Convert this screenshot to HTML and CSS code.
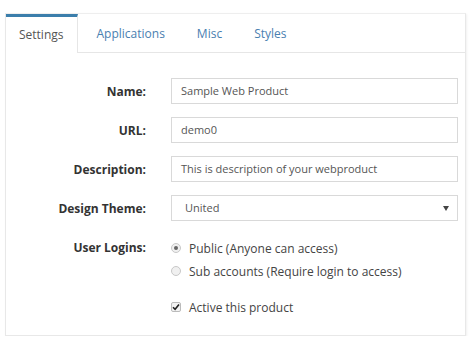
FILE: index.html
```html
<!DOCTYPE html>
<html>
<head>
<meta charset="utf-8">
<link rel="stylesheet" href="styles.css">
</head>
<body>
<div class="card">
  <ul class="tabs">
    <li class="tab active">Settings</li>
    <li class="tab">Applications</li>
    <li class="tab">Misc</li>
    <li class="tab">Styles</li>
  </ul>
  <form class="panel">
    <div class="row">
      <label class="lbl">Name:</label>
      <div class="ctrl"><div class="input">Sample Web Product</div></div>
    </div>
    <div class="row">
      <label class="lbl">URL:</label>
      <div class="ctrl"><div class="input">demo0</div></div>
    </div>
    <div class="row">
      <label class="lbl">Description:</label>
      <div class="ctrl"><div class="input">This is description of your webproduct</div></div>
    </div>
    <div class="row">
      <label class="lbl">Design Theme:</label>
      <div class="ctrl"><div class="input select"><span>United</span><span class="caret"></span></div></div>
    </div>
    <div class="row logins">
      <label class="lbl">User Logins:</label>
      <div class="ctrl choices">
        <div class="choice"><span class="radio on"></span>Public (Anyone can access)</div>
        <div class="choice"><span class="radio"></span>Sub accounts (Require login to access)</div>
        <div class="choice check-row"><span class="check"><svg width="8" height="8" viewBox="0 0 8 8"><path d="M1 4.2 L3.1 6.3 L7 1.6" fill="none" stroke="#222" stroke-width="1.6"/></svg></span>Active this product</div>
      </div>
    </div>
  </form>
</div>
</body>
</html>
```
FILE: styles.css
```css
* { box-sizing: border-box; }
body {
  margin: 0;
  background: #fff;
  font-family: "Open Sans", "Liberation Sans", sans-serif;
  color: #333;
}
.card {
  margin: 13px 0 0 5px;
  width: 461px;
  height: 323px;
  border: 1px solid #e8e8e8;
  border-top-color: #eeeeee;
  box-shadow: 1px 1px 2px rgba(0,0,0,0.06);
  background: #fff;
}
.tabs {
  list-style: none;
  margin: 0;
  padding: 0;
  display: flex;
  height: 39px;
  border-bottom: 1px solid #e6e6e6;
}
.tab {
  padding: 0 13px;
  margin-right: 6px;
  font-size: 12px;
  line-height: 39px;
  color: #4a80b0;
}
.tab.active {
  color: #555;
  background: #fff;
  border-top: 3px solid #3b7eab;
  border-right: 1px solid #e6e6e6;
  line-height: 35px;
  height: 39px;
  margin-bottom: -1px;
}
.panel {
  padding: 25px 7px 0 0;
}
.row {
  display: flex;
  align-items: center;
  margin-bottom: 13px;
}
.lbl {
  width: 140px;
  text-align: right;
  font-weight: bold;
  font-size: 12px;
  color: #333;
  margin-right: 25px;
  flex: none;
}
.ctrl { flex: 1; }
.input {
  height: 26px;
  border: 1px solid #d9d9d9;
  font-size: 11px;
  color: #555;
  padding: 0 9px;
  line-height: 24px;
}
.select {
  display: flex;
  justify-content: space-between;
  align-items: center;
  padding-left: 13px;
  padding-right: 8px;
}
.caret {
  width: 0;
  height: 0;
  border-left: 3px solid transparent;
  border-right: 3px solid transparent;
  border-top: 5px solid #444;
}
.logins {
  align-items: flex-start;
  margin-top: 18px;
}
.logins .lbl { line-height: 18px; }
.choice {
  display: flex;
  align-items: center;
  font-size: 12px;
  color: #444;
  height: 18px;
  margin-bottom: 5px;
}
.check-row { margin-top: 18px; }
.radio {
  width: 10px;
  height: 10px;
  border-radius: 50%;
  border: 1px solid #c8c8c8;
  background: #f0f0f0;
  margin-right: 8px;
  position: relative;
}
.radio.on::after {
  content: "";
  position: absolute;
  left: 2px;
  top: 2px;
  width: 4px;
  height: 4px;
  border-radius: 50%;
  background: #666;
}
.check {
  width: 10px;
  height: 10px;
  border: 1px solid #bbb;
  border-radius: 2px;
  background: #f3f3f3;
  margin-right: 8px;
  display: flex;
  align-items: center;
  justify-content: center;
}
```
